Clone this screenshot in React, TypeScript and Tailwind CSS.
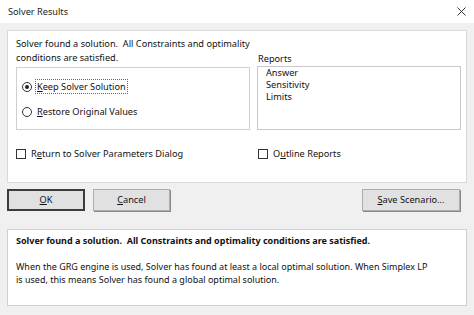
function Radio({ checked, accel, rest, focus }: { checked?: boolean; accel: string; rest: string; focus?: boolean }) {
  return (
    <div className="flex items-center gap-[4px] h-[13px]">
      <span className="w-[10px] h-[10px] rounded-full border border-[#333] bg-white grid place-items-center shrink-0">
        {checked && <span className="w-[4px] h-[4px] rounded-full bg-[#222]" />}
      </span>
      <span className={focus ? "outline outline-1 outline-dotted outline-[#666] px-[1px] leading-[13px]" : "px-[1px] leading-[13px]"}>
        <span className="underline underline-offset-1">{accel}</span>
        {rest}
      </span>
    </div>
  );
}

function Check({ accelBefore, accel, rest }: { accelBefore: string; accel: string; rest: string }) {
  return (
    <div className="flex items-center gap-[5px] h-[13px]">
      <span className="w-[10px] h-[10px] border border-[#333] bg-white shrink-0" />
      <span className="leading-[13px]">
        {accelBefore}
        <span className="underline underline-offset-1">{accel}</span>
        {rest}
      </span>
    </div>
  );
}

function Btn({ accel, rest, def, className }: { accel: string; rest: string; def?: boolean; className: string }) {
  return (
    <button
      className={
        "h-[22px] bg-[#e1e1e1] flex items-center justify-center leading-none " +
        (def ? "border-2 border-[#3c3c3c] " : "border border-[#adadad] shadow-[1px_1px_0_#8a8a8a] ") +
        className
      }
    >
      <span className="underline underline-offset-1">{accel}</span>
      {rest}
    </button>
  );
}

export default function App() {
  return (
    <div className="w-[474px] h-[315px] bg-[#f0f0f0] text-[9.2px] text-[#111] font-['Noto_Sans','Open_Sans',sans-serif] overflow-hidden">
      <div className="h-[23px] bg-white flex items-center justify-between pl-[8px] pr-[8px]">
        <span className="text-[9.2px] text-[#222]">Solver Results</span>
        <svg width="9" height="9" viewBox="0 0 9 9" className="text-[#333]">
          <path d="M0.5 0.5 L8.5 8.5 M8.5 0.5 L0.5 8.5" stroke="currentColor" strokeWidth="1" fill="none" />
        </svg>
      </div>

      <div className="px-[7px] pt-[7px]">
        <div className="h-[153px] bg-white border border-[#d9d9d9] pl-[8px] pr-[5px] pt-[6px] flex flex-col">
          <div className="flex gap-[7px]">
            <div className="w-[234px] shrink-0">
              <p className="whitespace-nowrap leading-[14px]">
                Solver found a solution.&nbsp; All Constraints and optimality
                <br />
                conditions are satisfied.
              </p>
              <div className="mt-[2px] h-[63px] border border-[#d0d0d0] pl-[5px] pt-[12px] flex flex-col gap-[12px]">
                <Radio checked focus accel="K" rest="eep Solver Solution" />
                <Radio accel="R" rest="estore Original Values" />
              </div>
            </div>
            <div className="flex-1 pt-[16px]">
              <div className="leading-[12px] pl-[1px]">Reports</div>
              <div className="mt-[1px] h-[64px] border border-[#c9c9c9] pl-[8px] leading-[12px]">
                <div>Answer</div>
                <div>Sensitivity</div>
                <div>Limits</div>
              </div>
            </div>
          </div>
          <div className="flex mt-[17px]">
            <div className="w-[242px]">
              <Check accelBefore="R" accel="e" rest="turn to Solver Parameters Dialog" />
            </div>
            <Check accelBefore="O" accel="u" rest="tline Reports" />
          </div>
        </div>

        <div className="flex mt-[6px]">
          <Btn def accel="O" rest="K" className="w-[78px]" />
          <Btn accel="C" rest="ancel" className="w-[77px] ml-[8px]" />
          <Btn accel="S" rest="ave Scenario..." className="w-[98px] ml-auto mr-[7px]" />
        </div>

        <div className="mt-[18px] h-[77px] bg-white border border-[#d0d0d0] px-[8px] pt-[3px]">
          <p className="font-bold leading-[16px] text-[9px]">Solver found a solution.&nbsp; All Constraints and optimality conditions are satisfied.</p>
          <p className="mt-[11px] leading-[13px] whitespace-nowrap text-[9px]">
            When the GRG engine is used, Solver has found at least a local optimal solution. When Simplex LP
            <br />
            is used, this means Solver has found a global optimal solution.
          </p>
        </div>
      </div>
    </div>
  );
}
